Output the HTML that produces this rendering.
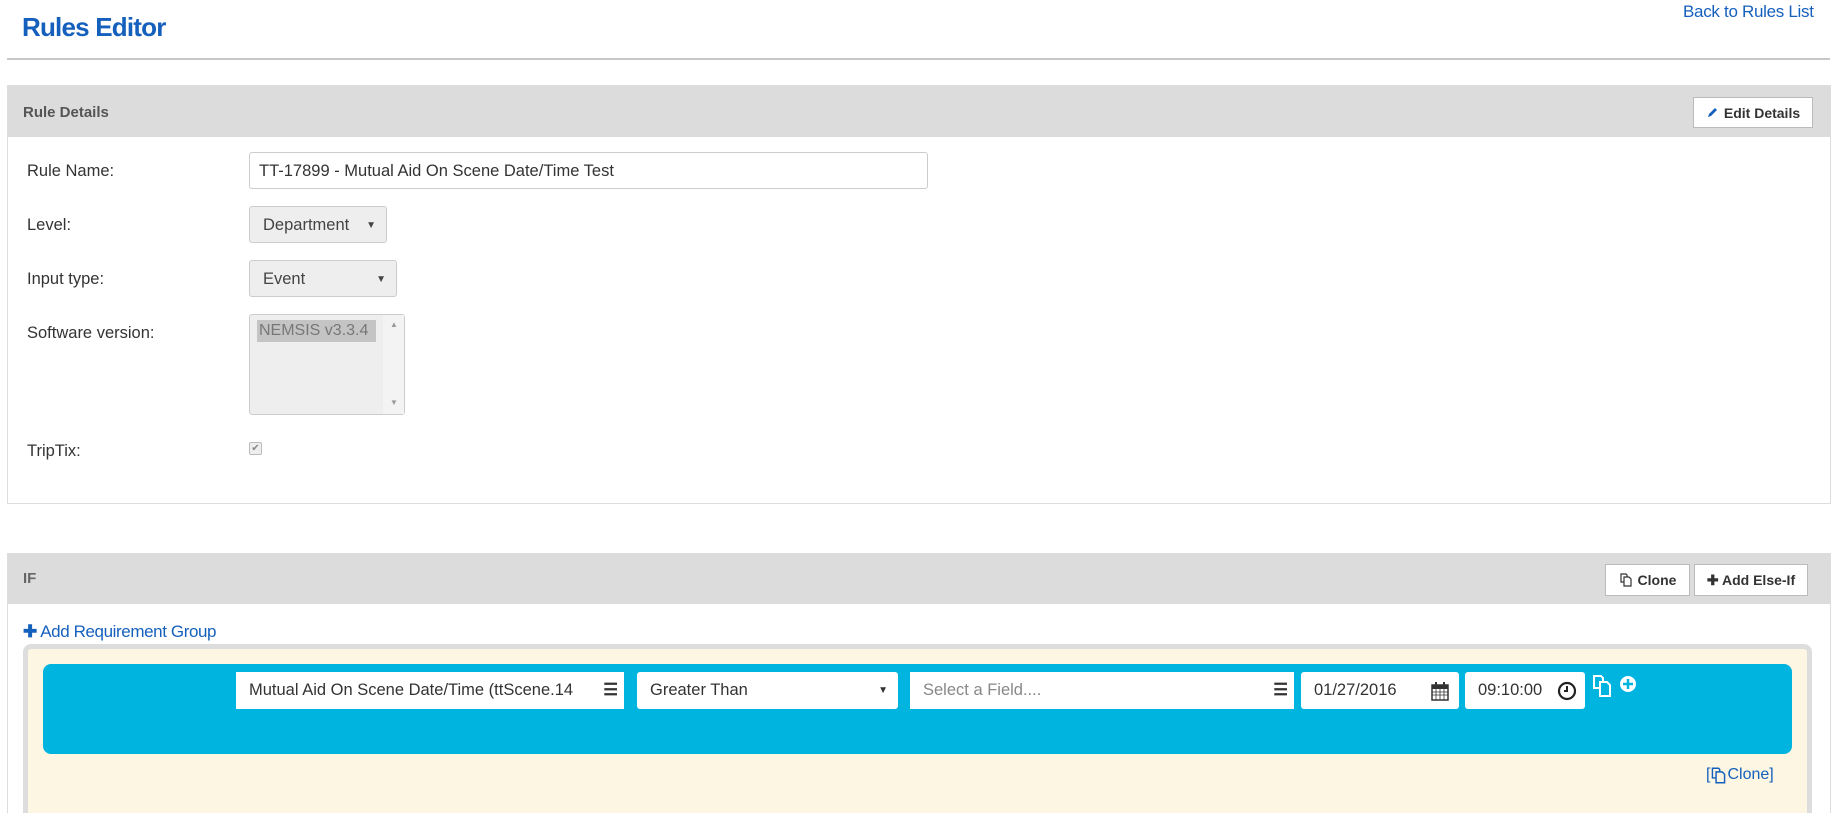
<!DOCTYPE html>
<html><head><meta charset="utf-8"><style>
*{box-sizing:border-box;margin:0;padding:0}
html,body{width:1838px;height:813px;overflow:hidden}
body{background:#fff;font-family:"Liberation Sans",sans-serif;color:#333;position:relative}
.a{position:absolute}
.lbl{position:absolute;left:27px;font-size:16.5px;color:#333;line-height:20px}
.inp{position:absolute;background:#fff;border:1px solid #ccc;border-radius:3px;font-size:16.5px;line-height:20px;padding:8px 9px;color:#333}
.sel{position:absolute;background:#eee;border:1px solid #ccc;border-radius:3px;font-size:16.5px;padding:8px 13px;line-height:20px;color:#444}
.sel .ar{position:absolute;right:10px;top:9px;font-size:10px}
.btn{position:absolute;background:#fff;border:1px solid #bbb;font-size:14px;font-weight:bold;color:#333;display:flex;align-items:center;justify-content:center;gap:5px}
.wf{position:absolute;top:672px;height:37px;background:#fff;border-radius:3px;font-size:16.5px;line-height:37px;padding-left:13px;color:#333}
</style></head><body>
<div class="a" style="left:22px;top:12px;font-size:26px;font-weight:bold;color:#1560bd;letter-spacing:-0.8px">Rules Editor</div>
<div class="a" style="left:1683px;top:2px;font-size:17px;color:#1560bd;letter-spacing:-0.3px">Back to Rules List</div>
<div class="a" style="left:7px;top:58px;width:1823px;height:2px;background:#c8c8c8"></div>

<div class="a" style="left:7px;top:85px;width:1824px;height:419px;border:1px solid #ddd"></div>
<div class="a" style="left:8px;top:86px;width:1822px;height:51px;background:#dcdcdc"></div>
<div class="a" style="left:23px;top:104px;font-size:15px;font-weight:bold;color:#555">Rule Details</div>
<div class="btn" style="left:1693px;top:97px;width:120px;height:31px"><svg width="13" height="13" viewBox="0 0 13 13"><path d="M2 11 L3 8 L9 2 L11 4 L5 10 Z" fill="#1560bd"/></svg>Edit Details</div>

<div class="lbl" style="top:161px">Rule Name:</div>
<div class="inp" style="left:249px;top:152px;width:679px;height:37px">TT-17899 - Mutual Aid On Scene Date/Time Test</div>
<div class="lbl" style="top:215px">Level:</div>
<div class="sel" style="left:249px;top:206px;width:138px;height:37px">Department<span class="ar">▼</span></div>
<div class="lbl" style="top:269px">Input type:</div>
<div class="sel" style="left:249px;top:260px;width:148px;height:37px">Event<span class="ar">▼</span></div>
<div class="lbl" style="top:323px">Software version:</div>
<div class="a" style="left:249px;top:314px;width:156px;height:101px;background:#eee;border:1px solid #ccc;border-radius:3px"></div>
<div class="a" style="left:383px;top:315px;width:21px;height:99px;background:#f3f3f3"></div>
<div class="a" style="left:390px;top:320px;font-size:8px;color:#999">▲</div>
<div class="a" style="left:390px;top:398px;font-size:8px;color:#999">▼</div>
<div class="a" style="left:257px;top:320px;width:119px;height:22px;background:#c4c4c4;color:#777;font-size:16px;line-height:22px;padding-left:2px">NEMSIS v3.3.4</div>
<div class="lbl" style="top:441px">TripTix:</div>
<div class="a" style="left:249px;top:442px;width:13px;height:13px;border:1px solid #bbb;border-radius:2px;background:#eee;font-size:10px;line-height:11px;text-align:center;color:#888">✔</div>

<div class="a" style="left:7px;top:553px;width:1824px;height:260px;border:1px solid #ddd;border-bottom:none"></div>
<div class="a" style="left:8px;top:553px;width:1822px;height:51px;background:#dcdcdc"></div>
<div class="a" style="left:23px;top:570px;font-size:15px;font-weight:bold;color:#666">IF</div>
<div class="btn" style="left:1605px;top:564px;width:85px;height:32px"><svg width="14" height="14" viewBox="0 0 14 14" fill="none" stroke="#333" stroke-width="1.2"><path d="M2 1h5l1 1v7H2z"/><path d="M5 4h5l2 2v7H5z" fill="#fff"/></svg>Clone</div>
<div class="btn" style="left:1694px;top:564px;width:114px;height:32px">✚ Add Else-If</div>

<div class="a" style="left:23px;top:622px;font-size:17px;color:#1560bd;letter-spacing:-0.4px"><b>✚</b> Add Requirement Group</div>
<div class="a" style="left:23px;top:644px;width:1789px;height:169px;background:#fcf6e3;border:5px solid #ddd;border-bottom:none;border-radius:8px 8px 0 0"></div>
<div class="a" style="left:43px;top:664px;width:1749px;height:90px;background:#00b4e0;border-radius:8px"></div>
<div class="wf" style="left:236px;width:388px;border-radius:0">Mutual Aid On Scene Date/Time (ttScene.14<span style="position:absolute;right:6px;font-weight:bold">☰</span></div>
<div class="wf" style="left:637px;width:261px">Greater Than<span style="position:absolute;right:10px;font-size:10px">▼</span></div>
<div class="wf" style="left:910px;width:384px;color:#888;border-radius:0">Select a Field....<span style="position:absolute;right:6px;color:#333;font-weight:bold">☰</span></div>
<div class="wf" style="left:1301px;width:158px">01/27/2016<svg class="a" style="right:9px;top:9px" width="20" height="20" viewBox="0 0 20 20"><rect x="2" y="4" width="16" height="15" fill="#fff" stroke="#333" stroke-width="1.5"/><rect x="2" y="4" width="16" height="4" fill="#333"/><path d="M2 11h16M2 14h16M6 8v11M10 8v11M14 8v11" stroke="#333" stroke-width="0.8"/><rect x="5" y="1" width="2" height="5" fill="#333"/><rect x="13" y="1" width="2" height="5" fill="#333"/></svg></div>
<div class="wf" style="left:1465px;width:120px">09:10:00<svg class="a" style="right:8px;top:9px" width="20" height="20" viewBox="0 0 20 20"><circle cx="10" cy="10" r="8" fill="none" stroke="#222" stroke-width="2.2"/><path d="M10 5v5H7" stroke="#222" stroke-width="2" fill="none"/></svg></div>
<svg class="a" style="left:1591px;top:674px" width="50" height="24" viewBox="0 0 50 24"><path d="M3 2h7l2 2v10H3z" fill="none" stroke="#fff" stroke-width="2"/><path d="M9 8h7l3 3v11H9z" fill="#00b4e0" stroke="#fff" stroke-width="2"/><circle cx="37" cy="10" r="8" fill="#fff"/><path d="M37 5v10M32 10h10" stroke="#00b4e0" stroke-width="2.5"/></svg>
<div class="a" style="left:1706px;top:766px;font-size:16px;color:#1560bd;display:flex;align-items:center">[<svg width="17" height="17" viewBox="0 0 14 14" fill="none" stroke="#1560bd" stroke-width="1.2"><path d="M2 1h5l1 1v7H2z"/><path d="M5 4h5l2 2v7H5z" fill="#fcf6e3"/></svg>Clone]</div>
</body></html>
